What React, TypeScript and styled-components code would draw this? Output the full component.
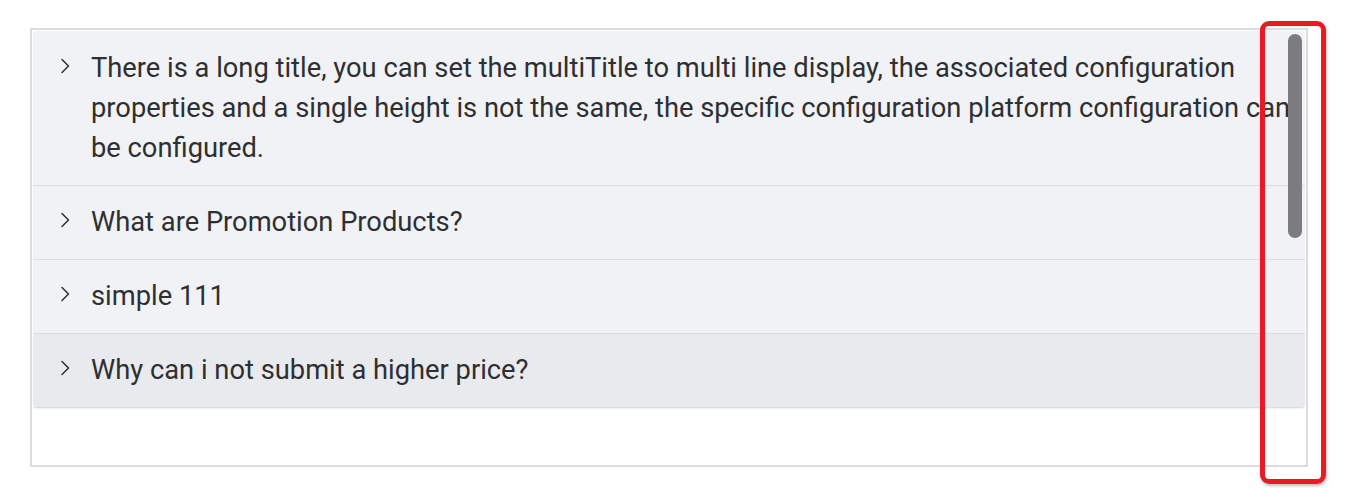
import styled, { createGlobalStyle } from 'styled-components'

const GlobalStyle = createGlobalStyle`
  html, body {
    margin: 0;
    padding: 0;
    background: #ffffff;
    font-family: Roboto, "Liberation Sans", sans-serif;
  }
`

const Page = styled.div`
  position: relative;
  width: 1356px;
  height: 504px;
  padding: 28px 0 0 30px;
  box-sizing: border-box;
`

const Frame = styled.div`
  position: relative;
  width: 1278px;
  height: 439px;
  border: 2px solid #dcdcde;
  box-sizing: border-box;
  overflow: hidden;
`

const List = styled.div`
  margin: 1px 1px 0 1px;
  border-radius: 4px;
  overflow: hidden;
  box-shadow: 0 1px 2px rgba(0, 0, 0, 0.06);
`

const Item = styled.div<{ $dim?: boolean }>`
  display: flex;
  align-items: flex-start;
  padding: 17px 0 16.5px 27px;
  background: ${({ $dim }) => ($dim ? '#e9eaee' : '#f1f2f6')};
  border-bottom: 1px solid #dcdde1;

  & + & {
    padding-top: 16.5px;
  }
`

const Chevron = styled.span`
  flex: 0 0 auto;
  width: 31px;
  height: 40px;
  display: flex;
  align-items: flex-start;
  padding-top: 10px;
  box-sizing: border-box;
`

const Title = styled.div`
  flex: 1;
  font-size: 27.3px;
  line-height: 40px;
  color: #2e2f31;
`

const Thumb = styled.div`
  position: absolute;
  top: 4px;
  right: 4px;
  width: 14px;
  height: 204px;
  border-radius: 7px;
  background: #7c7c7f;
`

const Highlight = styled.div`
  position: absolute;
  left: 1260px;
  top: 21px;
  width: 66px;
  height: 463px;
  border: 5px solid #ea1a24;
  border-radius: 9px;
  box-sizing: border-box;
  box-shadow: 1px 2px 3px rgba(0, 0, 0, 0.25);
`

const items = [
  'There is a long title, you can set the multiTitle to multi line display, the associated configuration properties and a single height is not the same, the specific configuration platform configuration can be configured.',
  'What are Promotion Products?',
  'simple 111',
  'Why can i not submit a higher price?',
]

function ChevronIcon() {
  return (
    <svg width="10" height="16" viewBox="0 0 10 16" fill="none">
      <path d="M2 1.5 L8.5 8 L2 14.5" stroke="#2e2f31" strokeWidth="1.5" strokeLinecap="round" strokeLinejoin="round" />
    </svg>
  )
}

export default function App() {
  return (
    <>
      <GlobalStyle />
      <Page>
        <Frame>
          <List>
            {items.map((text, i) => (
              <Item key={text} $dim={i === items.length - 1}>
                <Chevron>
                  <ChevronIcon />
                </Chevron>
                <Title>{text}</Title>
              </Item>
            ))}
          </List>
          <Thumb />
        </Frame>
        <Highlight />
      </Page>
    </>
  )
}
